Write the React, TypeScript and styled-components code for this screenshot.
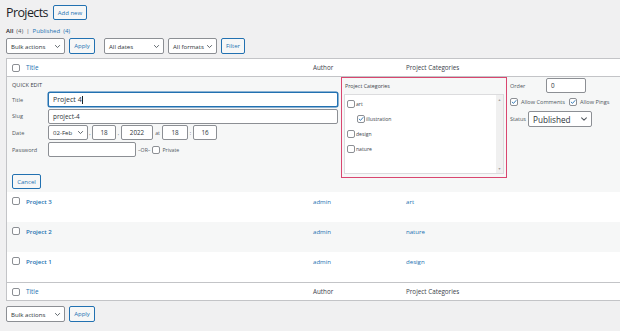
import React from 'react';
import styled, { createGlobalStyle } from 'styled-components';

const GlobalStyle = createGlobalStyle`
  html, body {
    margin: 0;
    padding: 0;
    background: #f0f0f1;
    overflow: hidden;
  }
  body {
    font-family: "Open Sans", "Noto Sans", "Liberation Sans", sans-serif;
    color: #3c434a;
    font-size: 6.5px;
  }
`;

const BLUE = '#2271b1';
const BORDER = '#c3c4c7';
const INPUT_BORDER = '#8c8f94';

// Layout
const Page = styled.div`
  width: 620px;
  height: 331px;
  overflow: hidden;
  padding: 4px 0 0 6px;
  box-sizing: border-box;
`;

const Heading = styled.div`
  display: flex;
  align-items: center;
  gap: 5px;
  height: 17px;
`;

const PageTitle = styled.h1`
  margin: 0;
  font-size: 12.5px;
  font-weight: 400;
  color: #1d2327;
  letter-spacing: -0.6px;
`;

const Button = styled.button<{ $w: number; $h?: number }>`
  width: ${p => p.$w}px;
  height: ${p => p.$h ?? 16}px;
  padding: 0;
  border: 1px solid ${BLUE};
  border-radius: 2px;
  background: #f6f7f7;
  color: ${BLUE};
  font-family: inherit;
  font-size: 6px;
  line-height: 1;
  cursor: pointer;
`;

const SubNav = styled.div`
  margin-top: 6px;
  display: flex;
  gap: 3px;
  font-size: 6px;
  color: #50575e;
`;

const Current = styled.span`
  color: #1d2327;
  font-weight: 600;
`;

const Link = styled.span`
  color: ${BLUE};
`;

const Toolbar = styled.div<{ $mt: number }>`
  display: flex;
  align-items: center;
  gap: 4px;
  margin-top: ${p => p.$mt}px;
  height: 16px;
`;

const Spacer = styled.div<{ $w: number }>`
  width: ${p => p.$w}px;
  flex-shrink: 0;
`;

const SelectBox = styled.div<{ $w: number; $h?: number; $big?: boolean }>`
  display: flex;
  align-items: center;
  justify-content: space-between;
  box-sizing: border-box;
  width: ${p => p.$w}px;
  height: ${p => p.$h ?? 16}px;
  padding: 0 3px 0 4px;
  background: #fff;
  border: 1px solid ${INPUT_BORDER};
  border-radius: 2px;
  color: #2c3338;
  font-size: ${p => (p.$big ? 8.2 : 6.1)}px;
  white-space: nowrap;
`;

const Chevron = ({ size = 7 }: { size?: number }) => (
  <svg width={size} height={size} viewBox="0 0 10 10" fill="none">
    <path d="M2 3.5 L5 6.5 L8 3.5" stroke="#50575e" strokeWidth="1.3" strokeLinecap="round" strokeLinejoin="round" />
  </svg>
);

function Select({ label, w, h, big }: { label: string; w: number; h?: number; big?: boolean }) {
  return (
    <SelectBox $w={w} $h={h} $big={big}>
      <span>{label}</span>
      <Chevron size={big ? 8 : 7} />
    </SelectBox>
  );
}

// Table
const Table = styled.div`
  margin-top: 4px;
  width: 640px;
  background: #fff;
  border: 1px solid ${BORDER};
  border-right: none;
`;

const Row = styled.div<{ $h: number; $alt?: boolean; $top?: boolean }>`
  display: grid;
  grid-template-columns: 14px 287px 93px 1fr;
  align-items: ${p => (p.$top ? 'start' : 'center')};
  height: ${p => p.$h}px;
  padding-left: 5px;
  padding-top: ${p => (p.$top ? 5 : 0)}px;
  box-sizing: border-box;
  background: ${p => (p.$alt ? '#f6f7f7' : '#fff')};
`;

const HeadRow = styled(Row)<{ $bottom?: boolean }>`
  border-bottom: ${p => (p.$bottom ? `1px solid ${BORDER}` : 'none')};
  border-top: ${p => (p.$bottom ? 'none' : `1px solid ${BORDER}`)};
`;

const HeadText = styled.span<{ $link?: boolean }>`
  font-size: 6.3px;
  color: ${p => (p.$link ? BLUE : '#3c434a')};
`;

const CellText = styled.span<{ $bold?: boolean }>`
  font-size: 6.1px;
  color: ${BLUE};
  font-weight: ${p => (p.$bold ? 600 : 400)};
`;

const Box = styled.span<{ $s?: number }>`
  display: inline-flex;
  align-items: center;
  justify-content: center;
  box-sizing: border-box;
  width: ${p => p.$s ?? 8}px;
  height: ${p => p.$s ?? 8}px;
  border: 1px solid ${INPUT_BORDER};
  border-radius: 2px;
  background: #fff;
  flex-shrink: 0;
`;

function Check({ checked, s }: { checked?: boolean; s?: number }) {
  return (
    <Box $s={s}>
      {checked && (
        <svg width="8" height="8" viewBox="0 0 10 10" fill="none">
          <path d="M2 5.2 L4.2 7.3 L8.3 2.6" stroke={BLUE} strokeWidth="1.5" strokeLinecap="round" strokeLinejoin="round" />
        </svg>
      )}
    </Box>
  );
}

// Quick edit
const QuickEdit = styled.div`
  display: grid;
  grid-template-columns: 329px 166px 1fr;
  height: 115px;
  background: #f6f7f7;
  padding-left: 5px;
  box-sizing: border-box;
`;

const LeftCol = styled.div`
  display: flex;
  flex-direction: column;
  padding-top: 3px;
`;

const Legend = styled.div`
  font-size: 5.6px;
  color: #3c434a;
  text-transform: uppercase;
  height: 12px;
  line-height: 11px;
`;

const FieldRow = styled.div`
  display: flex;
  align-items: center;
  height: 15px;
  margin-bottom: 1.7px;
`;

const FieldLabel = styled.span`
  width: 36px;
  font-size: 5.6px;
  color: #50575e;
`;

const TextInput = styled.div<{ $w: number; $focus?: boolean; $center?: boolean; $size?: number }>`
  box-sizing: border-box;
  width: ${p => p.$w}px;
  height: 15px;
  display: flex;
  align-items: center;
  justify-content: ${p => (p.$center ? 'center' : 'flex-start')};
  padding: 0 4px;
  background: #fff;
  border: 1px solid ${p => (p.$focus ? BLUE : INPUT_BORDER)};
  box-shadow: ${p => (p.$focus ? `0 0 0 0.5px ${BLUE}` : 'none')};
  border-radius: 2px;
  font-size: ${p => p.$size ?? 6.3}px;
  color: #2c3338;
  flex-shrink: 0;
`;

const Caret = styled.span`
  display: inline-block;
  width: 0.7px;
  height: 8px;
  background: #1d2327;
  margin-left: 0.5px;
`;

const Inline = styled.div<{ $gap?: number }>`
  display: flex;
  align-items: center;
  gap: ${p => p.$gap ?? 4}px;
`;

const Sep = styled.span<{ $w: number }>`
  width: ${p => p.$w}px;
  flex-shrink: 0;
  text-align: center;
  font-size: 5.2px;
  color: #50575e;
`;

const Small = styled.span`
  font-size: 5.2px;
  color: #50575e;
`;

const CancelRow = styled.div`
  margin-top: auto;
  padding-bottom: 3px;
`;

const CatFieldset = styled.div`
  height: 101px;
  box-sizing: border-box;
  border: 1.5px solid #d9466f;
  padding: 1px 2px 3px 2px;
  display: flex;
  flex-direction: column;
  background: #f6f7f7;
`;

const CatTitle = styled.div`
  font-size: 5.3px;
  color: #3c434a;
  height: 15px;
  line-height: 14px;
  padding-left: 1px;
`;

const CatList = styled.div`
  flex: 1;
  display: flex;
  background: #fff;
  border: 1px solid #dcdcde;
`;

const CatItems = styled.div`
  flex: 1;
  padding: 5px 2px;
  display: flex;
  flex-direction: column;
  gap: 6.5px;
`;

const CatItem = styled.div<{ $indent?: boolean }>`
  display: flex;
  align-items: center;
  gap: 1px;
  padding-left: ${p => (p.$indent ? 10 : 0)}px;
  font-size: 5.1px;
  color: #3c434a;
  height: 8.5px;
`;

const Scrollbar = styled.div`
  width: 7px;
  background: #f0f0f0;
  display: flex;
  flex-direction: column;
  justify-content: space-between;
  align-items: center;
  padding: 3px 0;
  font-size: 3.5px;
  color: #a0a0a0;
  line-height: 1;
`;

const RightCol = styled.div`
  display: flex;
  flex-direction: column;
  gap: 5px;
  margin-top: 1px;
  padding-left: 3px;
`;

const RightLabel = styled.span<{ $w?: number }>`
  width: ${p => (p.$w ? `${p.$w}px` : 'auto')};
  font-size: 5.5px;
  color: #50575e;
`;

const Checkline = styled.span`
  display: inline-flex;
  align-items: center;
  gap: 3px;
  font-size: 5.6px;
  color: #50575e;
`;

const rows = [
  { title: 'Project 3', cat: 'art', alt: false },
  { title: 'Project 2', cat: 'nature', alt: true },
  { title: 'Project 1', cat: 'design', alt: false },
];

export default function App() {
  return (
    <Page>
      <GlobalStyle />
      <Heading>
        <PageTitle>Projects</PageTitle>
        <Button $w={34} $h={15}>Add new</Button>
      </Heading>

      <SubNav>
        <Current>All</Current>
        <span>(4)</span>
        <span>|</span>
        <Link>Published</Link>
        <Link>(4)</Link>
      </SubNav>

      <Toolbar $mt={3}>
        <Select label="Bulk actions" w={59} />
        <Button $w={26}>Apply</Button>
        <Spacer $w={1} />
        <Select label="All dates" w={60} />
        <Select label="All formats" w={49} />
        <Button $w={24}>Filter</Button>
      </Toolbar>

      <Table>
        <HeadRow $h={18} $bottom>
          <Check />
          <HeadText $link>Title</HeadText>
          <HeadText>Author</HeadText>
          <HeadText>Project Categories</HeadText>
        </HeadRow>

        <QuickEdit>
          <LeftCol>
            <Legend>Quick Edit</Legend>
            <FieldRow>
              <FieldLabel>Title</FieldLabel>
              <TextInput $w={290} $focus $size={7}>
                Project 4<Caret />
              </TextInput>
            </FieldRow>
            <FieldRow>
              <FieldLabel>Slug</FieldLabel>
              <TextInput $w={290} $size={6.4}>project-4</TextInput>
            </FieldRow>
            <FieldRow>
              <FieldLabel>Date</FieldLabel>
              <Inline $gap={0}>
                <Select label="02-Feb" w={40} h={15} />
                <Sep $w={4}>,</Sep>
                <TextInput $w={24} $center>18</TextInput>
                <Sep $w={5}>,</Sep>
                <TextInput $w={32} $center>2022</TextInput>
                <Sep $w={9}>at</Sep>
                <TextInput $w={26} $center>18</TextInput>
                <Sep $w={5}>:</Sep>
                <TextInput $w={24} $center>16</TextInput>
              </Inline>
            </FieldRow>
            <FieldRow>
              <FieldLabel>Password</FieldLabel>
              <Inline $gap={2}>
                <TextInput $w={88} />
                <Small>–OR–</Small>
                <Check />
                <Small>Private</Small>
              </Inline>
            </FieldRow>
            <CancelRow>
              <Button $w={29} $h={15}>Cancel</Button>
            </CancelRow>
          </LeftCol>

          <CatFieldset>
            <CatTitle>Project Categories</CatTitle>
            <CatList>
              <CatItems>
                <CatItem><Check />art</CatItem>
                <CatItem $indent><Check checked />illustration</CatItem>
                <CatItem><Check />design</CatItem>
                <CatItem><Check />nature</CatItem>
              </CatItems>
              <Scrollbar>
                <span>▲</span>
                <span>▼</span>
              </Scrollbar>
            </CatList>
          </CatFieldset>

          <RightCol>
            <Inline $gap={0}>
              <RightLabel $w={36}>Order</RightLabel>
              <TextInput $w={40} $size={6.3}>0</TextInput>
            </Inline>
            <Inline $gap={4}>
              <Checkline><Check checked />Allow Comments</Checkline>
              <Checkline><Check checked />Allow Pings</Checkline>
            </Inline>
            <Inline $gap={2}>
              <RightLabel>Status</RightLabel>
              <Select label="Published" w={64} h={16} big />
            </Inline>
          </RightCol>
        </QuickEdit>

        {rows.map(r => (
          <Row key={r.title} $h={30} $alt={r.alt} $top>
            <Check />
            <CellText $bold>{r.title}</CellText>
            <CellText>admin</CellText>
            <CellText>{r.cat}</CellText>
          </Row>
        ))}

        <HeadRow $h={18}>
          <Check />
          <HeadText $link>Title</HeadText>
          <HeadText>Author</HeadText>
          <HeadText>Project Categories</HeadText>
        </HeadRow>
      </Table>

      <Toolbar $mt={5}>
        <Select label="Bulk actions" w={59} />
        <Button $w={26}>Apply</Button>
      </Toolbar>
    </Page>
  );
}
